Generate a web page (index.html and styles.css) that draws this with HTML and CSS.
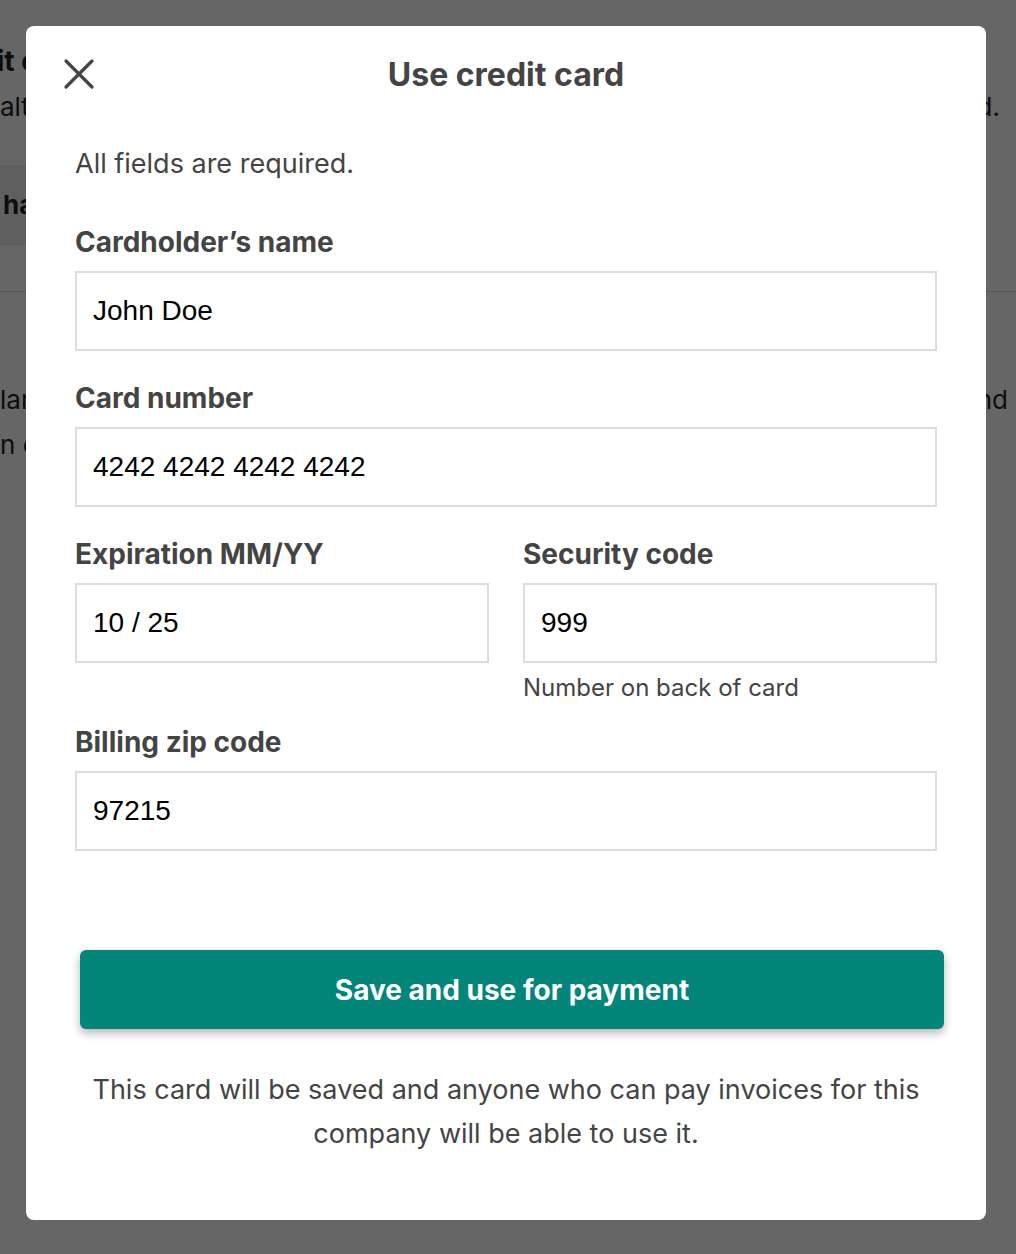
FILE: index.html
```html
<!DOCTYPE html>
<html lang="en">
<head>
  <meta charset="UTF-8">
  <title>Use credit card</title>
  <meta name="viewport" content="width=device-width, initial-scale=1.0">
  <link rel="stylesheet" href="styles.css">
</head>
<body>

  <!-- page behind the dialog -->
  <div class="page">
    <h1 class="page-title">Edit credit card</h1>
    <div class="page-line page-line-top">
      <span>alternate card on file</span>
      <span>Your card is saved.</span>
    </div>
    <div class="page-bar">hange</div>
    <hr class="page-rule">
    <div class="page-line page-line-low">
      <span>lar</span>
      <span>and</span>
    </div>
    <div class="page-line">
      <span>n c</span>
      <span></span>
    </div>
  </div>

  <div class="overlay">
    <div class="modal">
      <div class="modal-head">
        <button class="close" type="button" aria-label="Close">
          <svg width="32" height="32" viewBox="0 0 32 32">
            <path d="M3 3 L29 29 M29 3 L3 29" stroke="#444" stroke-width="3.2" stroke-linecap="round" fill="none"/>
          </svg>
        </button>
        <h2>Use credit card</h2>
        <span></span>
      </div>

      <p class="note">All fields are required.</p>

      <form id="cardForm">
        <div class="field">
          <label for="name">Cardholder’s name</label>
          <input type="text" id="name" value="John Doe">
        </div>

        <div class="field">
          <label for="number">Card number</label>
          <input type="text" id="number" value="4242 4242 4242 4242">
        </div>

        <div class="row">
          <div class="field">
            <label for="exp">Expiration MM/YY</label>
            <input type="text" id="exp" value="10 / 25">
          </div>
          <div class="field">
            <label for="cvc">Security code</label>
            <input type="text" id="cvc" value="999">
            <small class="hint">Number on back of card</small>
          </div>
        </div>

        <div class="field">
          <label for="zip">Billing zip code</label>
          <input type="text" id="zip" value="97215">
        </div>

        <button class="save" type="submit">Save and use for payment</button>
      </form>

      <p class="footnote">This card will be saved and anyone who can pay invoices for this company will be able to use it.</p>
    </div>
  </div>

</body>
</html>
```

FILE: styles.css
```css
:root {
  --text: #444;
  --border: #ddd;
  --accent: #03857a;
}

body {
  margin: 0;
  font-family: Inter, 'Noto Sans', sans-serif;
  color: var(--text);
  background: #fff;
}

/* background page */
.page {
  color: #222;
}

.page-title {
  margin: 0 0 0 -38px;
  padding: 44px 0 0 0;
  font-size: 28px;
  line-height: 34px;
  font-weight: 700;
}

.page-line {
  display: flex;
  justify-content: space-between;
  font-size: 26px;
  line-height: 32px;
  margin-top: 13px;
  padding-right: 8px;
}

.page-line-top {
  padding-right: 16px;
}

.page-line-low {
  margin-top: 92px;
}

.page-bar {
  margin-top: 42px;
  height: 80px;
  line-height: 80px;
  background: #eee;
  font-size: 26px;
  font-weight: 700;
  padding-left: 3px;
  width: 140px;
}

.page-rule {
  margin: 46px 0 0;
  border: none;
  border-top: 1px solid #d6d6d6;
}

/* dialog */
.overlay {
  position: fixed;
  inset: 0;
  background: rgba(0, 0, 0, 0.6);
  padding: 26px 30px 34px 26px;
  display: flex;
  align-items: flex-start;
}

.modal {
  background: #fff;
  border-radius: 8px;
  width: 960px;
  box-sizing: border-box;
  padding: 26px 49px 64px;
}

.modal-head {
  display: grid;
  grid-template-columns: 1fr auto 1fr;
  align-items: center;
  height: 44px;
  margin: 0 -12px;
}

.close {
  justify-self: start;
  background: none;
  border: none;
  padding: 0;
  width: 32px;
  height: 32px;
  cursor: pointer;
}

.close svg {
  display: block;
}

.modal-head h2 {
  margin: 0;
  font-size: 32px;
  font-weight: 700;
  color: var(--text);
}

.note {
  margin: 52px 0 0;
  font-size: 27px;
  line-height: 32px;
}

form {
  margin-top: 46px;
}

.field {
  margin-bottom: 31px;
}

label {
  display: block;
  font-size: 28px;
  line-height: 32px;
  font-weight: 700;
  margin-bottom: 13px;
}

input {
  display: block;
  width: 100%;
  box-sizing: border-box;
  height: 80px;
  border: 2px solid var(--border);
  border-radius: 0;
  padding: 0 16px;
  font-family: 'Liberation Sans', Arial, sans-serif;
  font-size: 28px;
  color: #000;
  background: #fff;
}

.row {
  display: grid;
  grid-template-columns: 1fr 1fr;
  gap: 34px;
  margin-bottom: 25px;
}

.row .field {
  margin-bottom: 0;
}

.hint {
  display: block;
  margin-top: 12px;
  font-size: 24px;
  line-height: 26px;
}

.save {
  display: block;
  width: 864px;
  height: 79px;
  margin: 99px 0 0 5px;
  border: none;
  border-radius: 6px;
  background: var(--accent);
  color: #fff;
  font-family: Inter, 'Noto Sans', sans-serif;
  font-size: 28px;
  font-weight: 700;
  box-shadow: 0 4px 10px rgba(0, 0, 0, 0.3);
  cursor: pointer;
}

.footnote {
  margin: 39px 0 0;
  text-align: center;
  font-size: 27px;
  line-height: 44px;
}
```
